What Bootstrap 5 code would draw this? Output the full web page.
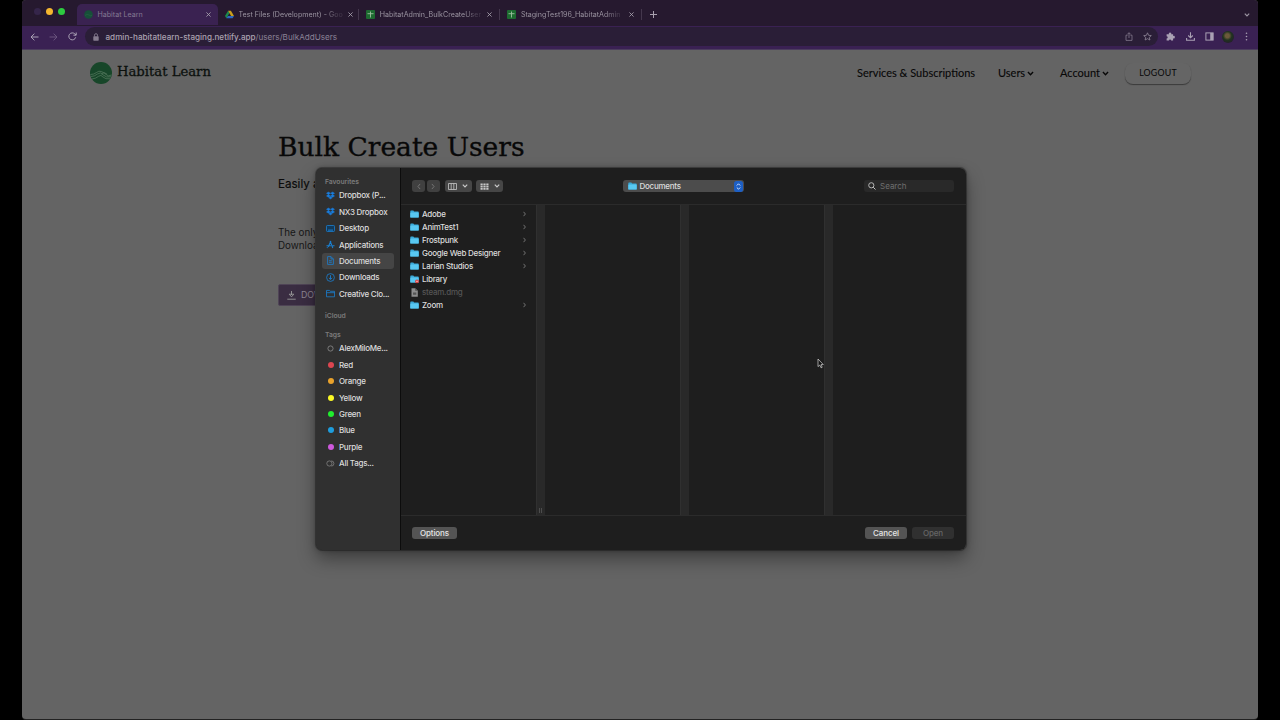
<!DOCTYPE html>
<html lang="en">
<head>
<meta charset="utf-8">
<meta name="viewport" content="width=device-width, initial-scale=1">
<title>Habitat Learn</title>
<link href="https://cdn.jsdelivr.net/npm/bootstrap@5.3.0/dist/css/bootstrap.min.css" rel="stylesheet">
<style>
  html, body { height: 720px; overflow: hidden; background: #000; }
  body { font-family: Inter, "Liberation Sans", sans-serif; font-size: 8px; line-height: 1; }
  svg { display: block; flex: none; overflow: visible; }
  .window { width: 1236px; height: 719px; margin-left: 22px; border-radius: 4px; background: #646464; box-shadow: 0 1px 0 #222; }

  /* browser chrome */
  .tabstrip { height: 26px; background: #26192f; color: #9a93a0; font-size: 7.1px; padding-top: 3px; }
  .lights { width: 55px; padding: 5px 0 0 12px; gap: 5px; height: 23px; }
  .lights i { width: 7px; height: 7px; border-radius: 50%; }
  .tab-item { height: 21px; width: 140.2px; padding: 0 7px 0 6.5px; gap: 5px; white-space: nowrap; }
  .tab-item.current { background: #3a2251; width: 141px; border-radius: 5px 5px 0 0; color: #857a93; }
  .tab-title { flex: 1; line-height: 12px; }
  .tab-title.fade-end { -webkit-mask-image: linear-gradient(90deg, #000 82%, rgba(0,0,0,.25) 96%); mask-image: linear-gradient(90deg, #000 82%, rgba(0,0,0,.25) 96%); }
  .sep { width: 1px; height: 11px; background: #44374d; }
  .toolbar { height: 24px; background: #3a2153; border-bottom: 1px solid #4b3d5d; color: #a69caf; padding: 0 10px 2px 8px; }
  .address { height: 19px; border-radius: 10px; background: #2a1e37; width: 1073px; margin-left: 8px; padding: 0 6px 0 8px; font-size: 8.15px; color: #8b8296; }
  .address b { font-weight: 500; color: #aaa2b0; }
  .url { padding: 1px 0 0 6.5px; }
  .avatar { width: 12px; height: 12px; border-radius: 50%; background: radial-gradient(circle at 45% 40%, #6b5a3a 0 20%, #20331f 45%, #24202a 75%); }

  /* site */
  .site-nav { height: 46px; padding: 0 67px 0 68px; color: #080808; }
  .brand { font-family: "DejaVu Serif", serif; font-size: 13.2px; margin: -3px 0 0 5px; color: #0c110e; -webkit-text-stroke: .3px #0c110e; }
  .nav-words { font-family: Lato, sans-serif; font-size: 11px; color: #070707; -webkit-text-stroke: .1px #070707; }
  .nav-words span { margin-top: -2px; }
  .w-serv { width: 141px; }
  .w-user { width: 28.5px; margin-right: .5px; }
  .w-acct { width: 42px; }
  .chev-users { margin-right: 26px; }
  .chev-account { margin-right: 16px; }
  .logout { width: 66px; height: 21px; border-radius: 8px; background: #656565; box-shadow: 0 1px 1px #3a3a3a; font-size: 8.8px; letter-spacing: .2px; -webkit-text-stroke: 0; }
  .site-body { padding: 35px 0 0 256px; color: #101010; }
  .site-body h1 { font-family: "DejaVu Serif", serif; font-size: 26.5px; line-height: 32px; margin: 0; color: #080808; white-space: nowrap; font-weight: 400; -webkit-text-stroke: .35px #080808; }
  .intro { font-size: 11.6px; line-height: 14px; margin-top: 14px; color: #0a0a0a; -webkit-text-stroke: .15px #0a0a0a; }
  .note { font-size: 9.8px; line-height: 13px; margin-top: 35px; color: #161616; }
  .download { width: 120px; height: 22px; margin-top: 32px; background: #3a2d42; border: 1px solid #4f4456; border-radius: 2px; color: #8d8592; font-size: 8.8px; padding: 0 8px; gap: 5px; }

  /* file picker, floating over the page */
  .picker { position: absolute; left: 316px; top: 168px; width: 650px; height: 382px; border-radius: 6px; overflow: hidden; background: #1e1e1e; color: #dcdcdc; font-weight: 500; font-size: 8px; letter-spacing: -.26px; }
  .picker-shadow { position: absolute; left: 316px; top: 168px; width: 650px; height: 382px; border-radius: 6px; box-shadow: 0 9px 18px rgba(0,0,0,.38), 0 0 5px rgba(0,0,0,.35), 0 0 0 1px #4a4a4a; }
  .places { width: 85px; background: #303030; border-right: 1px solid #0c0c0c; padding: 9px 6px 0 6px; white-space: nowrap; }
  .group-name { height: 10px; line-height: 10px; font-size: 6.8px; color: #7b7b7b; padding-left: 3px; font-weight: 600; letter-spacing: -.05px; }
  .place { height: 16.45px; padding: 0 4px; gap: 4px; border-radius: 3px; }
  .place svg { width: 9px; height: 9px; color: #1a7fd0; }
  .place.chosen { background: #454545; }
  .dot { width: 6px; height: 6px; border-radius: 50%; margin: 0 1.5px; flex: none; }
  .picker-bar { height: 37px; border-bottom: 1px solid #2b2b2b; padding: 0 12px 0 11px; }
  .tool { height: 12px; border-radius: 3px; background: #464646; color: #c8c8c8; gap: 5px; }
  .tool.dim { color: #777; width: 13px; background: #404040; }
  .folder-select { width: 121px; height: 12px; border-radius: 3px; background: #4c4c4c; padding: 0 1px 0 5px; gap: 3px; }
  .stepper { width: 9px; height: 11px; border-radius: 2.5px; background: #1d5fc4; color: #e8f0ff; }
  .find { width: 90px; height: 12px; border-radius: 3px; background: #292929; color: #6f6f6f; padding: 0 4px; gap: 4px; font-weight: 400; letter-spacing: 0; }
  .pane { width: 135.5px; }
  .pane.listing { width: 135px; padding-top: 2px; }
  .gutter { width: 8.5px; background: #292929; border-left: 1px solid #303030; }
  .entry { height: 13px; padding: 0 10px 0 9px; gap: 3px; }
  .entry > svg:first-child { margin-top: 1px; }
  .entry.off { color: #555; }
  .picker-foot { height: 35px; border-top: 1px solid #2b2b2b; padding: 0 12px 0 11px; }
  .push { height: 12px; border-radius: 3px; background: #545454; color: #e6e6e6; letter-spacing: -.1px; }
  .push.off { background: #303030; color: #666; }
  .pointer { position: absolute; left: 817px; top: 358px; }
</style>
</head>
<body>
<svg width="0" height="0" class="position-absolute">
  <defs>
    <symbol id="folder" viewBox="0 0 9 8"><path d="M.3 1.2Q.3.5 1 .5H3.3L4.2 1.4H8.1Q8.7 1.4 8.7 2V7Q8.7 7.6 8.1 7.6H.9Q.3 7.6.3 7Z" fill="#3aa9d8"/><rect x=".3" y="2.4" width="8.4" height="5.2" rx=".5" fill="#58c8f2"/></symbol>
    <symbol id="x" viewBox="0 0 6 6"><path d="M.5.5 5.5 5.5M5.5.5.5 5.5" stroke="#aaa3b0" stroke-width="1"/></symbol>
    <symbol id="sheet" viewBox="0 0 9 9"><rect width="9" height="9" rx="1" fill="#1d6b30"/><path d="M4.5 1.5V7.5M1.5 3.7H7.5" stroke="#9dbf9f" stroke-width=".9"/></symbol>
    <symbol id="dropbox" viewBox="0 0 10 10"><path d="M2.7 1 5 2.5 2.7 4 .4 2.5ZM7.3 1 9.6 2.5 7.3 4 5 2.5ZM2.7 4 5 5.5 2.7 7 .4 5.5ZM7.3 4 9.6 5.5 7.3 7 5 5.5ZM5 6.2 7 7.6 5 9 3 7.6Z" fill="#1a7fe0" stroke="#1a7fe0" stroke-width=".4"/></symbol>
    <symbol id="down" viewBox="0 0 6 4"><path d="M.8.7 3 3 5.2.7" fill="none" stroke="currentColor" stroke-width="1.2"/></symbol>
    <symbol id="right" viewBox="0 0 3 6"><path d="M.5.8 2.4 3 .5 5.2" fill="none" stroke="currentColor" stroke-width=".8"/></symbol>
  </defs>
</svg>

<div class="window overflow-hidden">
  <div class="tabstrip d-flex align-items-center">
    <div class="lights d-flex"><i style="background:#35254a"></i><i style="background:#f5b62f"></i><i style="background:#2dcb40"></i></div>
    <div class="tab-item current d-flex align-items-center">
      <svg width="9" height="9"><circle cx="4.5" cy="4.5" r="4.3" fill="#175039"/><path d="M1 5.5Q3 3.5 5 5T8 5.2" stroke="#2c6347" stroke-width=".6" fill="none"/></svg>
      <span class="tab-title">Habitat Learn</span><svg width="5" height="5"><use href="#x"/></svg>
    </div>
    <div class="tab-item d-flex align-items-center">
      <svg width="9" height="9" viewBox="0 0 9 9"><path d="M3.1.8 0 6 1.4 8.3 4.5 3Z" fill="#1b8a4b"/><path d="M3.1.8H5.9L9 6H6.1Z" fill="#c79e1c"/><path d="M2.9 6H9L7.6 8.3H1.4Z" fill="#2b68c2"/></svg>
      <span class="tab-title fade-end">Test Files (Development) - Goo</span><svg width="5" height="5"><use href="#x"/></svg>
    </div>
    <div class="sep"></div>
    <div class="tab-item d-flex align-items-center">
      <svg width="9" height="9"><use href="#sheet"/></svg>
      <span class="tab-title fade-end">HabitatAdmin_BulkCreateUser</span><svg width="5" height="5"><use href="#x"/></svg>
    </div>
    <div class="sep"></div>
    <div class="tab-item d-flex align-items-center">
      <svg width="9" height="9"><use href="#sheet"/></svg>
      <span class="tab-title fade-end">StagingTest196_HabitatAdmin</span><svg width="5" height="5"><use href="#x"/></svg>
    </div>
    <div class="sep"></div>
    <svg style="margin-left:8px" width="7" height="7" viewBox="0 0 7 7"><path d="M3.5 0V7M0 3.5H7" stroke="#a8a0ae" stroke-width="1"/></svg>
    <svg class="ms-auto me-2" width="6" height="4"><use href="#down"/></svg>
  </div>

  <div class="toolbar d-flex align-items-center">
    <svg width="9" height="8" viewBox="0 0 9 8"><path d="M8.5 4H1M4.4.7 1 4 4.4 7.3" fill="none" stroke="#aaa1b5"/></svg>
    <svg style="margin-left:10px" width="9" height="8" viewBox="0 0 9 8"><path d="M.5 4H8M4.6.7 8 4 4.6 7.3" fill="none" stroke="#6a557e"/></svg>
    <svg style="margin-left:10px" width="9" height="9" viewBox="0 0 9 9"><path d="M7.7 5.3A3.5 3.5 0 1 1 6.9 2L8 3.1M8.2.5V3.2H5.4" fill="none" stroke="#aaa1b5"/></svg>
    <div class="address d-flex align-items-center">
      <svg width="6" height="8" viewBox="0 0 6 8"><path d="M1.5 3.5V2.2a1.5 1.5 0 0 1 3 0V3.5" fill="none" stroke="#857b8e" stroke-width=".9"/><rect x=".3" y="3.3" width="5.4" height="4.4" rx=".6" fill="#857b8e"/></svg>
      <span class="url"><b>admin-habitatlearn-staging.netlify.app</b>/users/BulkAddUsers</span>
      <svg class="ms-auto" width="8" height="9" viewBox="0 0 8 9"><path d="M2.6 3.2H1V8.4H7V3.2H5.4M4 6V.8M2.4 2.3 4 .7 5.6 2.3" fill="none" stroke="#847a8d" stroke-width=".8"/></svg>
      <svg style="margin-left:10px" width="9" height="9" viewBox="0 0 9 9"><path d="M4.5.8 5.6 3.3 8.3 3.6 6.3 5.4 6.9 8 4.5 6.7 2.1 8 2.7 5.4.7 3.6 3.4 3.3Z" fill="none" stroke="#8f8698" stroke-width=".8"/></svg>
    </div>
    <div class="d-flex align-items-center ms-auto" style="gap:10px">
      <svg width="9" height="9" viewBox="0 0 9 9" style="margin-right:1px"><path d="M.6 2.3H2.9A1.25 1.25 0 1 1 5.2 2.3H7.1V4A1.25 1.25 0 1 1 7.1 6.3V8.6H5.1A1.05 1.05 0 0 0 3 8.6H.6V6.5A1.1 1.1 0 0 0 .6 4.3Z" fill="#aaa1b4"/></svg>
      <svg width="9" height="9" viewBox="0 0 9 9"><path d="M4.5.3V5.6M2.2 3.5 4.5 5.8 6.8 3.5M.6 6V8.3H8.4V6" fill="none" stroke="#aaa1b4" stroke-width="1.1"/></svg>
      <svg width="9" height="9" viewBox="0 0 9 9"><rect x=".9" y=".9" width="7.2" height="7.2" fill="none" stroke="#aaa1b4"/><rect x="5.2" y=".9" width="3" height="7.2" fill="#aaa1b4"/></svg>
      <div class="avatar" style="margin:0 1px 0 -2px"></div>
      <svg width="3" height="9" fill="#aaa1b4"><circle cx="1.5" cy="1.3" r=".8"/><circle cx="1.5" cy="4.5" r=".8"/><circle cx="1.5" cy="7.7" r=".8"/></svg>
    </div>
  </div>

  <nav class="site-nav d-flex align-items-center">
    <svg width="22" height="22" viewBox="0 0 22 22"><circle cx="11" cy="11" r="11" fill="#174629"/><g fill="none" stroke="#597c62" stroke-width=".7"><path d="M.5 12.5Q4 12.5 6.5 10.5T11 9.5Q13.5 10 16 12.5T21.5 13"/><path d="M.8 14.5Q4.5 14.5 7.5 12T13 12.8Q16 16 21 14.8"/><path d="M2 17Q6 16.5 8.5 14.3T13 15Q15.5 17.5 20 16.8"/><path d="M11.5 11.7Q14.5 9.5 17 12.2"/></g></svg>
    <span class="brand">Habitat Learn</span>
    <div class="nav-words d-flex align-items-center ms-auto">
      <span class="w-serv">Services &amp; Subscriptions</span>
      <span class="w-user">Users</span><svg width="7" height="5" class="chev-users"><use href="#down"/></svg>
      <span class="w-acct">Account</span><svg width="7" height="5" class="chev-account"><use href="#down"/></svg>
      <div class="logout d-flex align-items-center justify-content-center">LOGOUT</div>
    </div>
  </nav>

  <main class="site-body">
    <h1>Bulk Create Users</h1>
    <p class="intro mb-0">Easily a</p>
    <p class="note mb-0">The only<br>Downloa</p>
    <div class="download d-flex align-items-center">
      <svg width="9" height="9" viewBox="0 0 9 9"><path d="M4.5 0V4M2.2 3.2 4.5 5.8 6.8 3.2ZM.3 8.2H8.7" fill="none" stroke="#999" stroke-width=".9"/></svg><span>DOW</span>
    </div>
  </main>
</div>

<div class="picker-shadow"></div>
<section class="picker d-flex">
  <aside class="places flex-shrink-0">
    <div class="group-name">Favourites</div>
    <div class="place d-flex align-items-center"><svg><use href="#dropbox"/></svg>Dropbox (P...</div>
    <div class="place d-flex align-items-center"><svg><use href="#dropbox"/></svg>NX3 Dropbox</div>
    <div class="place d-flex align-items-center"><svg viewBox="0 0 9 9"><rect x=".5" y="1.5" width="8" height="6" rx=".8" fill="#133a5a" stroke="currentColor" stroke-width=".8"/><path d="M2 6.1H7" stroke="currentColor"/></svg>Desktop</div>
    <div class="place d-flex align-items-center"><svg viewBox="0 0 9 9"><path d="M4.1 1 6.8 8M4.9 1 2.2 7M.5 5.8H4.9M6.6 5.8H8.5M1.5 7.2 1 8" fill="none" stroke="currentColor" stroke-width="1.1"/></svg>Applications</div>
    <div class="place chosen d-flex align-items-center"><svg viewBox="0 0 9 9"><path d="M1.6.6H5L7.4 3V8.4H1.6ZM5 .6V3H7.4M3 4.7H5.8M3 6.3H5.8" fill="none" stroke="currentColor" stroke-width=".8"/></svg>Documents</div>
    <div class="place d-flex align-items-center"><svg viewBox="0 0 9 9"><circle cx="4.5" cy="4.5" r="3.9" fill="none" stroke="currentColor" stroke-width=".8"/><path d="M4.5 2.2V6.3M2.9 4.8 4.5 6.4 6.1 4.8" fill="none" stroke="currentColor" stroke-width=".9"/></svg>Downloads</div>
    <div class="place d-flex align-items-center"><svg viewBox="0 0 9 9"><path d="M.5 1.4H3.5L4.3 2.3H8.5V7.8H.5ZM.5 3.7H8.5" fill="none" stroke="currentColor" stroke-width=".8"/></svg>Creative Clo...</div>
    <div class="group-name" style="margin-top:9px">iCloud</div>
    <div class="group-name" style="margin-top:9px">Tags</div>
    <div class="place d-flex align-items-center"><svg viewBox="0 0 9 9"><circle cx="4.5" cy="4.5" r="2.6" fill="none" stroke="#8b8b8b" stroke-width=".8"/></svg>AlexMiloMe...</div>
    <div class="place d-flex align-items-center"><i class="dot" style="background:#dc4650"></i>Red</div>
    <div class="place d-flex align-items-center"><i class="dot" style="background:#e9a22c"></i>Orange</div>
    <div class="place d-flex align-items-center"><i class="dot" style="background:#fbf926"></i>Yellow</div>
    <div class="place d-flex align-items-center"><i class="dot" style="background:#20ee2e"></i>Green</div>
    <div class="place d-flex align-items-center"><i class="dot" style="background:#1e9ddd"></i>Blue</div>
    <div class="place d-flex align-items-center"><i class="dot" style="background:#cd59dc"></i>Purple</div>
    <div class="place d-flex align-items-center"><svg viewBox="0 0 9 9" fill="none" stroke="#8b8b8b" stroke-width=".7"><circle cx="3.4" cy="4.5" r="2.6"/><path d="M5.3 1.9A2.6 2.6 0 1 1 5.3 7.1"/></svg>All Tags...</div>
  </aside>

  <div class="flex-grow-1 d-flex flex-column">
    <header class="picker-bar d-flex align-items-center">
      <div class="tool dim d-flex align-items-center justify-content-center"><svg width="4" height="7" style="transform:scaleX(-1)"><use href="#right"/></svg></div>
      <div class="tool dim d-flex align-items-center justify-content-center" style="margin-left:1.5px"><svg width="4" height="7"><use href="#right"/></svg></div>
      <div class="tool d-flex align-items-center justify-content-center" style="width:27px;margin-left:5px"><svg width="9" height="7" viewBox="0 0 9 7"><path d="M.5.5H8.5V6.5H.5ZM3.2.5V6.5M5.8.5V6.5" fill="none" stroke="currentColor" stroke-width=".8"/></svg><svg width="6" height="4"><use href="#down"/></svg></div>
      <div class="tool d-flex align-items-center justify-content-center" style="width:27px;margin-left:4.5px"><svg width="9" height="7" viewBox="0 0 9 7"><path d="M.5 1.3H8.5M.5 3.6H8.5M.5 5.9H8.5" stroke="currentColor" stroke-width="1.7" stroke-dasharray="2.2 .7"/></svg><svg width="6" height="4"><use href="#down"/></svg></div>
      <div class="folder-select d-flex align-items-center" style="margin-left:119.5px"><svg width="9" height="8"><use href="#folder"/></svg><span>Documents</span>
        <div class="stepper ms-auto d-flex align-items-center justify-content-center"><svg width="5" height="7" viewBox="0 0 5 7"><path d="M.8 2.5 2.5.8 4.2 2.5M.8 4.5 2.5 6.2 4.2 4.5" fill="none" stroke="currentColor" stroke-width=".9"/></svg></div></div>
      <div class="find d-flex align-items-center ms-auto"><svg width="8" height="8" viewBox="0 0 8 8"><circle cx="3.3" cy="3.3" r="2.6" fill="none" stroke="#c4c4c4" stroke-width=".9"/><path d="M5.2 5.2 7.5 7.5" stroke="#c4c4c4"/></svg><span>Search</span></div>
    </header>
    <div class="d-flex flex-grow-1">
      <div class="pane listing">
        <div class="entry d-flex align-items-center"><svg width="9" height="8"><use href="#folder"/></svg><span>Adobe</span><svg class="ms-auto" width="3" height="6" color="#888"><use href="#right"/></svg></div>
        <div class="entry d-flex align-items-center"><svg width="9" height="8"><use href="#folder"/></svg><span>AnimTest1</span><svg class="ms-auto" width="3" height="6" color="#888"><use href="#right"/></svg></div>
        <div class="entry d-flex align-items-center"><svg width="9" height="8"><use href="#folder"/></svg><span>Frostpunk</span><svg class="ms-auto" width="3" height="6" color="#888"><use href="#right"/></svg></div>
        <div class="entry d-flex align-items-center"><svg width="9" height="8"><use href="#folder"/></svg><span>Google Web Designer</span><svg class="ms-auto" width="3" height="6" color="#888"><use href="#right"/></svg></div>
        <div class="entry d-flex align-items-center"><svg width="9" height="8"><use href="#folder"/></svg><span>Larian Studios</span><svg class="ms-auto" width="3" height="6" color="#888"><use href="#right"/></svg></div>
        <div class="entry d-flex align-items-center"><svg width="9" height="8"><use href="#folder"/><circle cx="7" cy="6.3" r="1.9" fill="#dd3b3b"/><path d="M5.9 6.3H8.1" stroke="#fff" stroke-width=".6"/></svg><span>Library</span></div>
        <div class="entry off d-flex align-items-center"><svg width="9" height="9" viewBox="0 0 9 9"><path d="M1.5.3H5.2L7.8 2.8V8.7H1.5Z" fill="#8d8d8d"/><path d="M5.2.3V2.8H7.8M3 4.5H6.3V6.7H3Z" fill="#555"/></svg><span>steam.dmg</span></div>
        <div class="entry d-flex align-items-center"><svg width="9" height="8"><use href="#folder"/></svg><span>Zoom</span><svg class="ms-auto" width="3" height="6" color="#888"><use href="#right"/></svg></div>
      </div>
      <div class="gutter d-flex align-items-end justify-content-center" style="padding-bottom:2px"><svg width="3" height="5"><path d="M.5 0V5M2.5 0V5" stroke="#555" stroke-width=".8"/></svg></div>
      <div class="pane"></div><div class="gutter"></div><div class="pane"></div><div class="gutter"></div>
    </div>
    <footer class="picker-foot d-flex align-items-center">
      <div class="push d-flex align-items-center justify-content-center" style="width:45px">Options</div>
      <div class="push d-flex align-items-center justify-content-center ms-auto" style="width:42px">Cancel</div>
      <div class="push off d-flex align-items-center justify-content-center" style="width:42px;margin-left:5px">Open</div>
    </footer>
  </div>
</section>

<svg class="pointer" width="7" height="11" viewBox="0 0 7 11"><path d="M1 1V8.6L2.8 7 4 9.8 5.2 9.3 4 6.6H6.3Z" fill="#111" stroke="#d8d8d8" stroke-width=".7"/></svg>
<script src="https://cdn.jsdelivr.net/npm/bootstrap@5.3.0/dist/js/bootstrap.bundle.min.js"></script>
</body>
</html>
